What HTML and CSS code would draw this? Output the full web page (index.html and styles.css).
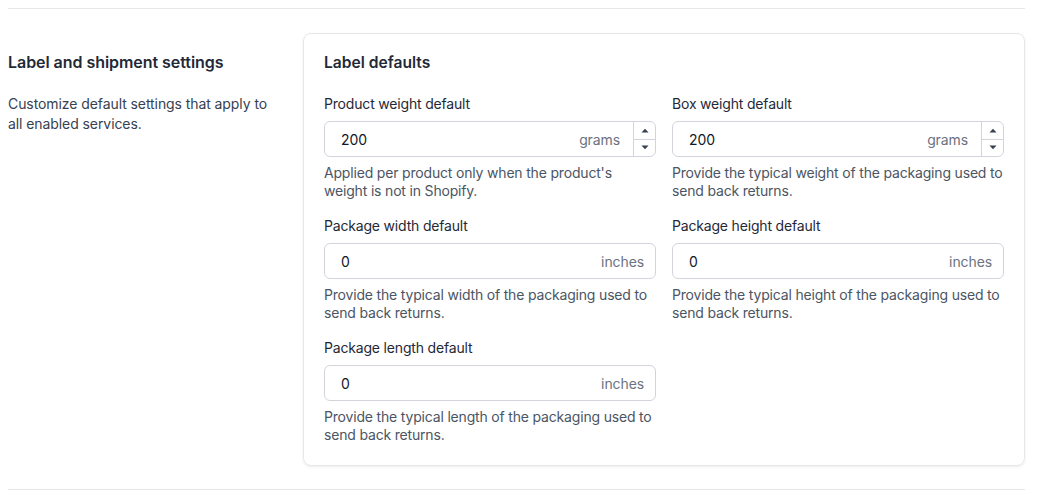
FILE: index.html
```html
<!DOCTYPE html>
<html>
<head>
<meta charset="utf-8">
<link rel="stylesheet" href="styles.css">
</head>
<body>
<div class="page">
  <hr class="rule">
  <section class="section">
    <div class="intro">
      <h2 class="intro-title">Label and shipment settings</h2>
      <p class="intro-desc">Customize default settings that apply to all enabled services.</p>
    </div>
    <div class="card">
      <h3 class="card-title">Label defaults</h3>
      <div class="grid">
        <div class="field">
          <label class="field-label">Product weight default</label>
          <div class="input">
            <span class="value">200</span>
            <span class="unit">grams</span>
            <span class="spin">
              <span class="spin-btn"><svg width="8" height="5" viewBox="0 0 8 5"><path d="M0.5 4.5 L4 0.8 L7.5 4.5 Z" fill="#374151"/></svg></span>
              <span class="spin-btn"><svg width="8" height="5" viewBox="0 0 8 5"><path d="M0.5 0.5 L4 4.2 L7.5 0.5 Z" fill="#374151"/></svg></span>
            </span>
          </div>
          <p class="help">Applied per product only when the product's weight is not in Shopify.</p>
        </div>
        <div class="field">
          <label class="field-label">Box weight default</label>
          <div class="input">
            <span class="value">200</span>
            <span class="unit">grams</span>
            <span class="spin">
              <span class="spin-btn"><svg width="8" height="5" viewBox="0 0 8 5"><path d="M0.5 4.5 L4 0.8 L7.5 4.5 Z" fill="#374151"/></svg></span>
              <span class="spin-btn"><svg width="8" height="5" viewBox="0 0 8 5"><path d="M0.5 0.5 L4 4.2 L7.5 0.5 Z" fill="#374151"/></svg></span>
            </span>
          </div>
          <p class="help">Provide the typical weight of the packaging used to send back returns.</p>
        </div>
        <div class="field">
          <label class="field-label">Package width default</label>
          <div class="input">
            <span class="value">0</span>
            <span class="unit unit-end">inches</span>
          </div>
          <p class="help">Provide the typical width of the packaging used to send back returns.</p>
        </div>
        <div class="field">
          <label class="field-label">Package height default</label>
          <div class="input">
            <span class="value">0</span>
            <span class="unit unit-end">inches</span>
          </div>
          <p class="help">Provide the typical height of the packaging used to send back returns.</p>
        </div>
        <div class="field">
          <label class="field-label">Package length default</label>
          <div class="input">
            <span class="value">0</span>
            <span class="unit unit-end">inches</span>
          </div>
          <p class="help">Provide the typical length of the packaging used to send back returns.</p>
        </div>
      </div>
    </div>
  </section>
  <hr class="rule">
</div>
</body>
</html>
```
FILE: styles.css
```css
* { box-sizing: border-box; }
html, body { margin: 0; padding: 0; background: #fff; }
body {
  font-family: Inter, "Liberation Sans", sans-serif;
  color: #1f2937;
  font-size: 14px;
}
.page {
  padding: 8px 13px 0 8px;
}
.rule {
  margin: 0;
  border: 0;
  border-top: 1px solid #e5e7eb;
}
.section {
  display: flex;
  padding: 24px 0 23px;
}
.intro {
  width: 295px;
  flex: none;
  padding-top: 19px;
}
.intro-title {
  margin: 0;
  font-size: 16px;
  font-weight: 600;
  line-height: 20px;
  color: #1f2937;
  letter-spacing: -0.05px;
}
.intro-desc {
  margin: 22px 0 0;
  font-size: 14px;
  line-height: 20px;
  color: #374151;
  width: 270px;
  letter-spacing: -0.08px;
}
.card {
  flex: 1;
  border: 1px solid #e5e7eb;
  border-radius: 8px;
  box-shadow: 0 1px 3px rgba(0,0,0,0.08);
  padding: 19px 20px 21px;
}
.card-title {
  margin: 0;
  font-size: 15.6px;
  font-weight: 600;
  line-height: 20px;
  color: #1f2937;
}
.grid {
  margin-top: 21px;
  display: grid;
  grid-template-columns: 332px 332px;
  column-gap: 16px;
  row-gap: 16px;
}
.field-label {
  display: block;
  font-size: 14px;
  line-height: 20px;
  color: #1f2937;
  margin-bottom: 7px;
  letter-spacing: -0.18px;
}
.input {
  height: 36px;
  border: 1px solid #d1d5db;
  border-radius: 6px;
  display: flex;
  align-items: center;
  padding-left: 16px;
  overflow: hidden;
}
.value {
  flex: 1;
  font-size: 14px;
  color: #111827;
}
.unit {
  font-size: 14px;
  color: #6b7280;
  margin-right: 13px;
  letter-spacing: -0.1px;
}
.unit-end { margin-right: 11px; }
.spin {
  align-self: stretch;
  width: 22px;
  border-left: 1px solid #d1d5db;
  display: flex;
  flex-direction: column;
}
.spin-btn {
  flex: 1;
  display: flex;
  align-items: center;
  justify-content: center;
}
.spin-btn + .spin-btn { border-top: 1px solid #d1d5db; }
.help {
  margin: 7px 0 0;
  font-size: 14px;
  line-height: 18px;
  color: #4b5563;
  letter-spacing: -0.18px;
}
```
